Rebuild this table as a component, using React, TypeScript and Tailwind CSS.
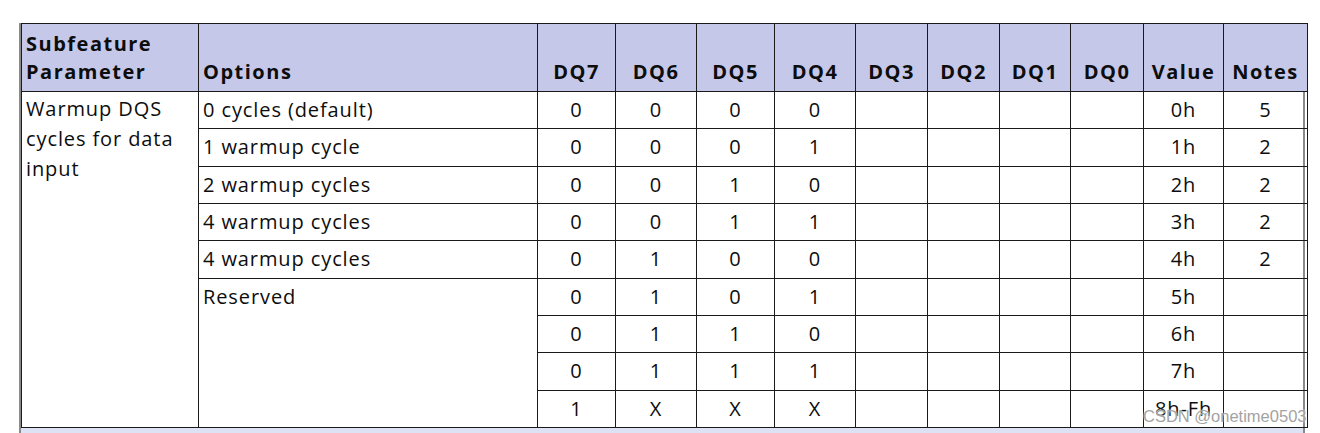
const widths = [177, 339, 78, 81, 78, 81, 72, 72, 71, 73, 80, 84];

const rows: { option?: string; optionSpan?: number; bits: string[]; value: string; note: string }[] = [
  { option: "0 cycles (default)", bits: ["0", "0", "0", "0"], value: "0h", note: "5" },
  { option: "1 warmup cycle", bits: ["0", "0", "0", "1"], value: "1h", note: "2" },
  { option: "2 warmup cycles", bits: ["0", "0", "1", "0"], value: "2h", note: "2" },
  { option: "4 warmup cycles", bits: ["0", "0", "1", "1"], value: "3h", note: "2" },
  { option: "4 warmup cycles", bits: ["0", "1", "0", "0"], value: "4h", note: "2" },
  { option: "Reserved", optionSpan: 4, bits: ["0", "1", "0", "1"], value: "5h", note: "" },
  { bits: ["0", "1", "1", "0"], value: "6h", note: "" },
  { bits: ["0", "1", "1", "1"], value: "7h", note: "" },
  { bits: ["1", "X", "X", "X"], value: "8h-Fh", note: "" },
];

const cell = "border border-[#1a1a1a]";
const head = `${cell} align-bottom pb-[5px] font-bold tracking-[1.5px]`;

export default function App() {
  return (
    <div className="relative h-[433px] w-[1320px] overflow-hidden bg-white pt-[23px] pl-[19px] font-['Open_Sans','Noto_Sans',sans-serif] text-[20px] tracking-[0.9px] text-[#0d0d0d]">
      <div className="w-[1286px] border-x-[2px] border-x-[#8a8a8a]">
        <table className="w-full table-fixed border-collapse">
          <colgroup>
            {widths.map((w, i) => (
              <col key={i} style={{ width: w }} />
            ))}
          </colgroup>
          <thead>
            <tr className="h-[68px] bg-[#c5c8e9] leading-[28px]">
              <th className={`${head} px-[4px] text-left`}>
                Subfeature
                <br />
                Parameter
              </th>
              <th className={`${head} px-[4px] text-left`}>Options</th>
              {["DQ7", "DQ6", "DQ5", "DQ4", "DQ3", "DQ2", "DQ1", "DQ0", "Value", "Notes"].map((h) => (
                <th key={h} className={`${head} whitespace-nowrap px-0 text-center`}>
                  {h}
                </th>
              ))}
            </tr>
          </thead>
          <tbody>
            {rows.map((r, i) => (
              <tr key={i} className="h-[37.33px]">
                {i === 0 && (
                  <td rowSpan={9} className={`${cell} px-[4px] pt-[2px] align-top leading-[30px]`}>
                    Warmup DQS cycles for data input
                  </td>
                )}
                {r.option && (
                  <td rowSpan={r.optionSpan ?? 1} className={`${cell} px-[4px] ${r.optionSpan ? "align-top pt-[3px]" : ""}`}>
                    {r.option}
                  </td>
                )}
                {r.bits.map((b, j) => (
                  <td key={j} className={`${cell} text-center`}>
                    {b}
                  </td>
                ))}
                {[0, 1, 2, 3].map((k) => (
                  <td key={`e${k}`} className={cell} />
                ))}
                <td className={`${cell} whitespace-nowrap text-center`}>{r.value}</td>
                <td className={`${cell} text-center`}>{r.note}</td>
              </tr>
            ))}
          </tbody>
        </table>
        <div className="h-[8px] bg-[#dde3f4]" />
      </div>
      {/* watermark stamped over the last row */}
      <div className="absolute top-[404px] left-[1143px] whitespace-nowrap font-['Liberation_Sans',Arial,sans-serif] text-[16.5px] tracking-normal text-[#a3a3a3] [text-shadow:0_0_2px_#fff]">
        CSDN @onetime0503
      </div>
    </div>
  );
}
